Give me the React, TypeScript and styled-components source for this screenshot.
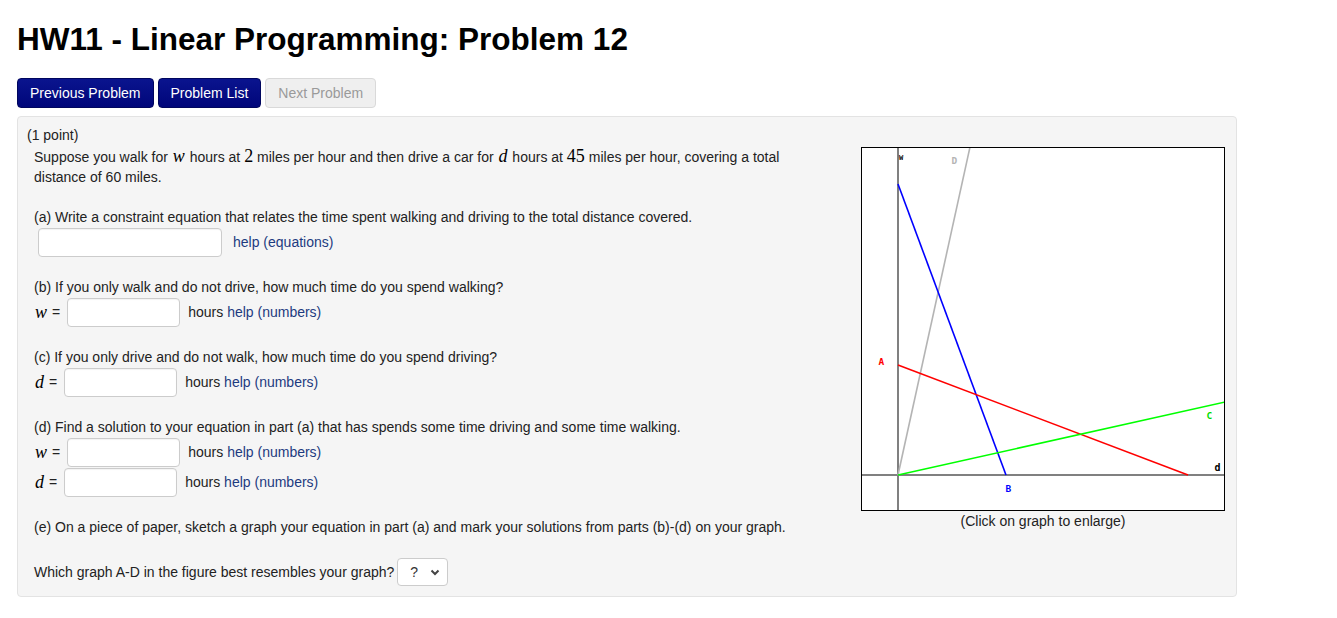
import React from 'react'
import styled, { createGlobalStyle } from 'styled-components'

const GlobalStyle = createGlobalStyle`
  html, body {
    margin: 0;
    padding: 0;
    background: #ffffff;
  }
  body {
    font-family: "Liberation Sans", Arial, sans-serif;
    font-size: 14px;
    color: #222;
  }
`

const Page = styled.div`
  padding: 0 17px;
`

const Title = styled.h1`
  margin: 22px 0 21px 0;
  font-size: 31.5px;
  line-height: 35px;
  font-weight: bold;
  color: #000;
`

const Nav = styled.div`
  display: flex;
  gap: 4px;
  margin-bottom: 8px;
`

const NavButton = styled.button<{ $disabled?: boolean }>`
  height: 30px;
  padding: 0 12px;
  font-family: "Liberation Sans", Arial, sans-serif;
  font-size: 14px;
  border-radius: 4px;
  border: 1px solid ${(p) => (p.$disabled ? '#d9d9d9' : '#00065e')};
  background: ${(p) =>
    p.$disabled ? '#efefef' : 'linear-gradient(#0a148e, #00067a)'};
  color: ${(p) => (p.$disabled ? '#9a9a9a' : '#ffffff')};
  cursor: ${(p) => (p.$disabled ? 'default' : 'pointer')};
`

const Panel = styled.div`
  width: 1220px;
  box-sizing: border-box;
  background: #f5f5f5;
  border: 1px solid #e3e3e3;
  border-radius: 4px;
  padding: 8px 11px 9px 9px;
  line-height: 20px;
`

const Points = styled.div`
  height: 20px;
`

const Body = styled.div`
  display: flex;
  margin-top: 2px;
`

const Text = styled.div`
  flex: 1;
  padding-left: 7px;
  margin-right: 40px;
`

const Part = styled.div`
  margin-top: 20px;
`

const Row = styled.div`
  display: flex;
  align-items: center;
  height: 30px;
  white-space: pre;
`

const MathVar = styled.span<{ $gap?: number }>`
  display: inline-block;
  line-height: 18px;
  font-family: "Liberation Serif", "Times New Roman", serif;
  font-style: italic;
  font-size: 18px;
  color: #000;
  margin-right: ${(p) => p.$gap ?? 1}px;
  padding-left: 1px;
`

const MathNum = styled.span`
  display: inline-block;
  line-height: 18px;
  font-family: "Liberation Serif", "Times New Roman", serif;
  font-size: 18px;
  color: #000;
`

const Input = styled.input<{ $w: number; $ml: number }>`
  box-sizing: border-box;
  width: ${(p) => p.$w}px;
  height: 29px;
  margin: 0 0 0 ${(p) => p.$ml}px;
  border: 1px solid #cccccc;
  border-radius: 4px;
  background: #ffffff;
  box-shadow: inset 0 1px 1px rgba(0, 0, 0, 0.05);
`

const After = styled.span<{ $ml: number }>`
  margin-left: ${(p) => p.$ml}px;
`

const Help = styled.a`
  color: #1d3b80;
  text-decoration: none;
`

const SelectWrap = styled.span`
  position: relative;
  display: inline-block;
  margin-left: 3px;
`

const Select = styled.select`
  appearance: none;
  box-sizing: border-box;
  width: 51px;
  height: 28px;
  padding: 0 0 0 12px;
  border: 1px solid #cccccc;
  border-radius: 4px;
  background: #ffffff;
  font-family: "Liberation Sans", Arial, sans-serif;
  font-size: 14px;
  color: #333;
`

const Chevron = styled.svg`
  position: absolute;
  right: 8px;
  top: 11px;
  pointer-events: none;
`

const GraphCol = styled.div`
  width: 364px;
  flex: none;
  text-align: center;
`

const GraphFrame = styled.div`
  width: 364px;
  height: 364px;
  box-sizing: border-box;
  border: 1px solid #000;
  background: #ffffff;
  cursor: pointer;
`

const Caption = styled.div`
  height: 20px;
`

function Graph() {
  return (
    <GraphFrame>
      <svg width="362" height="362" viewBox="1 1 362 362">
        <line x1="37" y1="0" x2="37" y2="364" stroke="#808080" strokeWidth="2" />
        <line x1="0" y1="328" x2="364" y2="328" stroke="#808080" strokeWidth="2" />
        <line x1="37" y1="328" x2="109" y2="0" stroke="#b4b4b4" strokeWidth="1.6" />
        <line x1="37" y1="37" x2="145" y2="328" stroke="#0000ff" strokeWidth="1.6" />
        <line x1="37" y1="218" x2="327" y2="328" stroke="#ff0000" strokeWidth="1.6" />
        <line x1="37" y1="328" x2="364" y2="255" stroke="#00ff00" strokeWidth="1.6" />
        <g fontFamily='"DejaVu Sans Mono", monospace' fontWeight="bold">
          <text x="38" y="12.5" fontSize="7" fill="#000">W</text>
          <text x="90.5" y="16.5" fontSize="9.5" fill="#b4b4b4">D</text>
          <text x="17.5" y="217.5" fontSize="9.5" fill="#ff0000">A</text>
          <text x="345.5" y="271.5" fontSize="9.5" fill="#00dd00">C</text>
          <text x="353.5" y="323.5" fontSize="10" fill="#000">d</text>
          <text x="144.5" y="344.5" fontSize="9.5" fill="#0000ff">B</text>
        </g>
      </svg>
    </GraphFrame>
  )
}

function App() {
  return (
    <Page>
      <GlobalStyle />
      <Title>HW11 - Linear Programming: Problem 12</Title>
      <Nav>
        <NavButton>Previous Problem</NavButton>
        <NavButton>Problem List</NavButton>
        <NavButton $disabled disabled>Next Problem</NavButton>
      </Nav>
      <Panel>
        <Points>(1 point)</Points>
        <Body>
          <Text>
            <div>
              Suppose you walk for <MathVar>w</MathVar> hours at <MathNum>2</MathNum> miles per
              hour and then drive a car for <MathVar>d</MathVar> hours at <MathNum>45</MathNum>{' '}
              miles per hour, covering a total distance of 60 miles.
            </div>
            <Part>
              (a) Write a constraint equation that relates the time spent walking and driving to the
              total distance covered.
            </Part>
            <Row>
              <Input $w={184} $ml={4} />
              <After $ml={11}>
                <Help href="#">help (equations)</Help>
              </After>
            </Row>
            <Part>(b) If you only walk and do not drive, how much time do you spend walking?</Part>
            <Row>
              <MathVar $gap={5}>w</MathVar>= 
              <Input $w={113} $ml={7} />
              <After $ml={8}>
                hours <Help href="#">help (numbers)</Help>
              </After>
            </Row>
            <Part>(c) If you only drive and do not walk, how much time do you spend driving?</Part>
            <Row>
              <MathVar $gap={5}>d</MathVar>= 
              <Input $w={113} $ml={7} />
              <After $ml={8}>
                hours <Help href="#">help (numbers)</Help>
              </After>
            </Row>
            <Part>
              (d) Find a solution to your equation in part (a) that has spends some time driving and
              some time walking.
            </Part>
            <Row>
              <MathVar $gap={5}>w</MathVar>= 
              <Input $w={113} $ml={7} />
              <After $ml={8}>
                hours <Help href="#">help (numbers)</Help>
              </After>
            </Row>
            <Row>
              <MathVar $gap={5}>d</MathVar>= 
              <Input $w={113} $ml={7} />
              <After $ml={8}>
                hours <Help href="#">help (numbers)</Help>
              </After>
            </Row>
            <Part>
              (e) On a piece of paper, sketch a graph your equation in part (a) and mark your
              solutions from parts (b)-(d) on your graph.
            </Part>
            <Part>
              <Row>
                Which graph A-D in the figure best resembles your graph?
                <SelectWrap>
                  <Select defaultValue="?">
                    <option value="?">?</option>
                    <option value="A">A</option>
                    <option value="B">B</option>
                    <option value="C">C</option>
                    <option value="D">D</option>
                  </Select>
                  <Chevron width="10" height="7" viewBox="0 0 10 7">
                    <path d="M1.5 1.5 L5 5 L8.5 1.5" fill="none" stroke="#444" strokeWidth="2" />
                  </Chevron>
                </SelectWrap>
              </Row>
            </Part>
          </Text>
          <GraphCol>
            <Graph />
            <Caption>(Click on graph to enlarge)</Caption>
          </GraphCol>
        </Body>
      </Panel>
    </Page>
  )
}

export default App
